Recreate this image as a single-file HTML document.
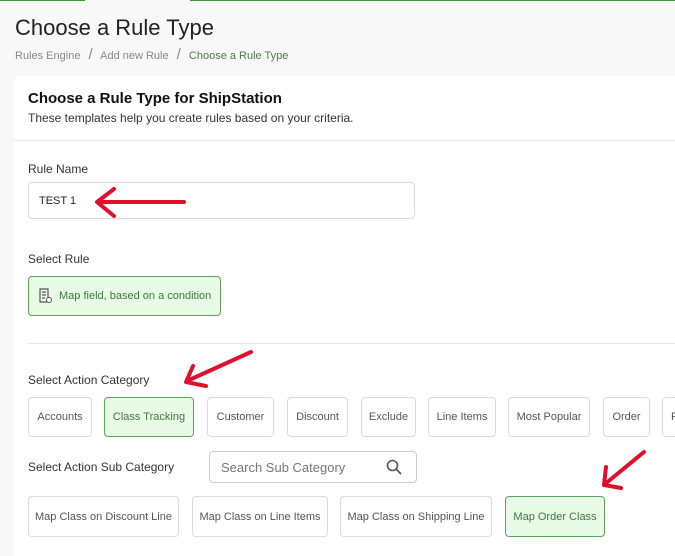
<!DOCTYPE html><html><head><style>
body{margin:0;width:675px;height:546px;overflow:hidden;background:#f8f8f8;font-family:"Liberation Sans",sans-serif;position:relative}
.a{position:absolute;white-space:nowrap}
.b{position:absolute;border:1px solid #dcdcdc;border-radius:4px;background:#fff;font-size:11px;color:#555;display:flex;align-items:center;justify-content:center;box-sizing:border-box}
.g{background:#e8fbe6;border-color:#5ca35a;color:#3f7a3d}
</style></head><body>
<div class="a" style="left:0;top:0;width:85px;height:1px;background:#3a9a3a"></div>
<div class="a" style="left:190px;top:0;width:485px;height:1px;background:#3a9a3a"></div>
<div class="a" style="left:15px;top:15px;font-size:22px;color:#222">Choose a Rule Type</div>
<div class="a" style="left:15px;top:46px;font-size:11px;color:#888">Rules Engine <span style="font-size:15px;margin:0 5px">/</span> Add new Rule <span style="font-size:15px;margin:0 5px">/</span> <span style="color:#4d7d4a">Choose a Rule Type</span></div>
<div class="a" style="left:14px;top:76px;width:661px;height:480px;background:#fff;border-radius:6px 0 0 0"></div>
<div class="a" style="left:28px;top:90px;font-size:15px;font-weight:bold;color:#111">Choose a Rule Type for ShipStation</div>
<div class="a" style="left:28px;top:111px;font-size:12px;color:#333">These templates help you create rules based on your criteria.</div>
<div class="a" style="left:14px;top:140px;width:661px;height:1px;background:#e6e6e6"></div>
<div class="a" style="left:28px;top:162px;font-size:12px;color:#333">Rule Name</div>
<div class="b" style="left:28px;top:182px;width:387px;height:37px;justify-content:flex-start;padding-left:10px;color:#222">TEST 1</div>
<div class="a" style="left:28px;top:252px;font-size:12px;color:#333">Select Rule</div>
<div class="b g" style="left:28px;top:276px;width:193px;height:40px;justify-content:flex-start;padding-left:8px">
<svg width="16" height="16" viewBox="0 0 16 16" style="margin-right:6px"><path d="M3 1h8v13H3z M5 4h4M5 7h4M5 10h3" fill="none" stroke="#555" stroke-width="1.2"/><circle cx="12" cy="12" r="2.5" fill="#fff" stroke="#555"/></svg>Map field, based on a condition</div>
<div class="a" style="left:28px;top:343px;width:647px;height:1px;background:#e6e6e6"></div>
<div class="a" style="left:28px;top:373px;font-size:12px;color:#333">Select Action Category</div>
<div class="b" style="left:28px;top:397px;width:64px;height:40px">Accounts</div>
<div class="b g" style="left:104px;top:397px;width:90px;height:40px">Class Tracking</div>
<div class="b" style="left:207px;top:397px;width:67px;height:40px">Customer</div>
<div class="b" style="left:287px;top:397px;width:61px;height:40px">Discount</div>
<div class="b" style="left:361px;top:397px;width:55px;height:40px">Exclude</div>
<div class="b" style="left:428px;top:397px;width:68px;height:40px">Line Items</div>
<div class="b" style="left:508px;top:397px;width:82px;height:40px">Most Popular</div>
<div class="b" style="left:603px;top:397px;width:47px;height:40px">Order</div>
<div class="b" style="left:662px;top:397px;width:30px;height:40px;justify-content:flex-start;padding-left:8px">P</div>
<div class="a" style="left:28px;top:460px;font-size:12px;color:#333">Select Action Sub Category</div>
<div class="b" style="left:209px;top:451px;width:208px;height:32px;justify-content:flex-start;padding-left:11px;font-size:13px;color:#777;border-color:#ccc">Search Sub Category
<svg width="16" height="16" viewBox="0 0 16 16" style="position:absolute;right:14px;top:7px"><circle cx="6.5" cy="6.5" r="5" fill="none" stroke="#555" stroke-width="1.6"/><path d="M10 10l5 5" stroke="#555" stroke-width="1.8"/></svg></div>
<div class="b" style="left:28px;top:496px;width:151px;height:41px">Map Class on Discount Line</div>
<div class="b" style="left:192px;top:496px;width:136px;height:41px">Map Class on Line Items</div>
<div class="b" style="left:340px;top:496px;width:152px;height:41px">Map Class on Shipping Line</div>
<div class="b g" style="left:505px;top:496px;width:100px;height:41px">Map Order Class</div>
<svg class="a" style="left:0;top:0" width="675" height="546"><g fill="none" stroke="#e0102a" stroke-width="4" stroke-linecap="round" stroke-linejoin="round">
<path d="M184 202H98M114 189L97 202L114 216"/>
<path d="M251 352L187 381M193 366L186 382L206 386"/>
<path d="M644 452L605 484M606 467L604 485L621 488"/></g></svg>
</body></html>
